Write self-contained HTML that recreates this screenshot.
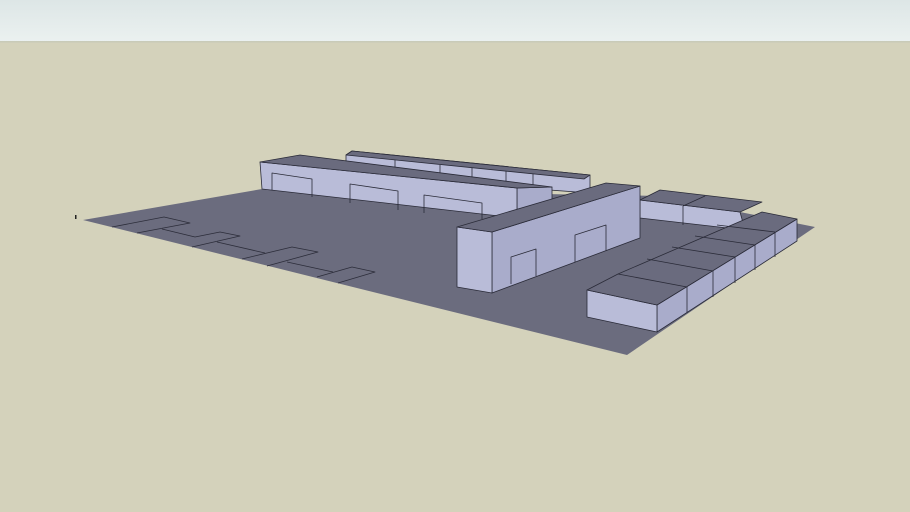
<!DOCTYPE html>
<html><head><meta charset="utf-8"><style>
html,body{margin:0;padding:0;width:910px;height:512px;overflow:hidden;background:#d4d2bb}
svg{display:block}
</style></head><body>
<svg width="910" height="512" viewBox="0 0 910 512" xmlns="http://www.w3.org/2000/svg">
<defs><linearGradient id="sky" x1="0" y1="0" x2="0" y2="1"><stop offset="0" stop-color="#dde6e6"/><stop offset="1" stop-color="#ebf1f0"/></linearGradient></defs>
<rect x="0" y="0" width="910" height="42" fill="url(#sky)"/>
<rect x="0" y="41" width="910" height="1.5" fill="#c9cbb8"/>
<g stroke="#2a2b38" stroke-width="0.8" stroke-linejoin="round">
<!-- slab -->
<polygon points="83,220 262,189 660,196 815,227 627,355" fill="#6b6c7e" stroke="none"/>
<!-- parking lines -->
<g fill="none" stroke="#2c2d3a">
<polyline points="112,227 164,217 190,223 137,233"/>
<line x1="162" y1="229" x2="195" y2="237"/>
<polyline points="195,237 220,232 240,236 192,247"/>
<line x1="217" y1="242" x2="265" y2="253"/>
<polyline points="242,259 292,247 318,252 267,266"/>
<line x1="287" y1="262" x2="333" y2="272"/>
<polyline points="317,277 352,267 375,272 338,283"/>
</g>
<!-- back row -->
<polygon points="346,155 352,151 590,175 590,193 346,175" fill="#b9bcd8"/>
<polygon points="346,155 352,151 590,175 584,179" fill="#6a6b7e"/>
<g fill="none"><line x1="395" y1="160" x2="395" y2="180"/><line x1="440" y1="165" x2="440" y2="185"/><line x1="472" y1="168" x2="472" y2="188"/><line x1="506" y1="171" x2="506" y2="191"/><line x1="533" y1="174" x2="533" y2="194"/></g>
<!-- building A -->
<polygon points="517,188 552,187 552,212 517,218" fill="#a9accb"/>
<polygon points="260,162 517,188 517,218 262,189" fill="#b9bcd8"/>
<polygon points="260,162 300,155 552,187 517,188" fill="#6a6b7e"/>
<g fill="none">
<polyline points="272,190 272,173 312,179 312,197"/>
<polyline points="350,203 350,184 398,191 398,210"/>
<polyline points="424,213 424,195 482,203 482,219"/>
</g>
<!-- right back pair -->
<polygon points="640,200 740,212 745,230 640,218" fill="#b9bcd8"/>
<polygon points="640,200 660,190 762,202 740,212" fill="#6a6b7e"/>
<line x1="683" y1="206" x2="683" y2="225"/>
<line x1="683" y1="206" x2="705" y2="196"/>
<!-- building B -->
<polygon points="492,232 640,186 640,238 492,293" fill="#a9accb"/>
<polygon points="457,227 492,232 492,293 457,287" fill="#b9bcd8"/>
<polygon points="457,227 492,232 640,186 606,183" fill="#6a6b7e"/>
<g fill="none">
<polyline points="511,284 511,257 536,249 536,276"/>
<polyline points="575,262 575,235 606,225 606,251"/>
</g>
<!-- garage row -->
<polygon points="657,305 797,219 797,241 657,332" fill="#a9accb"/>
<polygon points="587,290 657,305 657,332 587,317" fill="#b9bcd8"/>
<polygon points="587,290 618,274 762,212 797,219 657,305" fill="#6a6b7e"/>
<g fill="none">
<line x1="687" y1="287" x2="618" y2="274"/>
<line x1="713" y1="271" x2="647" y2="259"/>
<line x1="735" y1="257" x2="672" y2="247"/>
<line x1="755" y1="245" x2="695" y2="236"/>
<line x1="775" y1="232" x2="717" y2="225"/>
<line x1="687" y1="287" x2="687" y2="313"/>
<line x1="713" y1="271" x2="713" y2="297"/>
<line x1="735" y1="257" x2="735" y2="283"/>
<line x1="755" y1="245" x2="755" y2="270"/>
<line x1="775" y1="232" x2="775" y2="257"/>
</g>
</g>
<rect x="75" y="215" width="1.5" height="4" fill="#222"/>
</svg>
</body></html>
